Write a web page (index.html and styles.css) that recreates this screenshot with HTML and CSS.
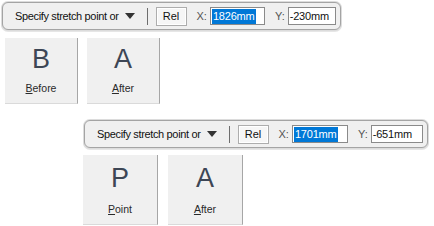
FILE: index.html
```html
<!DOCTYPE html>
<html>
<head>
<meta charset="utf-8">
<link rel="stylesheet" href="styles.css">
</head>
<body>
<div class="group group-one">
  <div class="toolbar">
    <span class="prompt">Specify stretch point or</span>
    <span class="caret"></span>
    <span class="sep"></span>
    <span class="rel">Rel</span>
    <span class="lbl lbl-x">X:</span>
    <span class="field field-x1"><span class="sel">1826mm</span></span>
    <span class="lbl lbl-y">Y:</span>
    <span class="field field-y1">-230mm</span>
  </div>
  <div class="buttons">
    <div class="btn"><span class="big">B</span><span class="cap"><u>B</u>efore</span></div>
    <div class="btn"><span class="big">A</span><span class="cap"><u>A</u>fter</span></div>
  </div>
</div>
<div class="group group-two">
  <div class="toolbar">
    <span class="prompt">Specify stretch point or</span>
    <span class="caret"></span>
    <span class="sep"></span>
    <span class="rel">Rel</span>
    <span class="lbl lbl-x">X:</span>
    <span class="field field-x2"><span class="sel">1701mm</span></span>
    <span class="lbl lbl-y">Y:</span>
    <span class="field field-y2">-651mm</span>
  </div>
  <div class="buttons">
    <div class="btn btn-wide"><span class="big">P</span><span class="cap"><u>P</u>oint</span></div>
    <div class="btn btn-wide"><span class="big">A</span><span class="cap"><u>A</u>fter</span></div>
  </div>
</div>
</body>
</html>
```
FILE: styles.css
```css
html, body {
  margin: 0;
  padding: 0;
  background: #ffffff;
}
body {
  font-family: "Liberation Sans", Arial, sans-serif;
  font-size: 11px;
  color: #1a1a1a;
  width: 434px;
  height: 226px;
  overflow: hidden;
  white-space: nowrap;
}
.group {
  display: flex;
  flex-direction: column;
  align-items: flex-start;
}
.group-one {
  padding: 2px 0 0 2px;
}
.group-two {
  margin-top: 16px;
  padding-left: 84px;
}
.toolbar {
  display: flex;
  flex-shrink: 0;
  align-items: center;
  height: 26px;
  border: 1px solid #a4a4a4;
  border-radius: 6px;
  background: #f0f0f0;
  box-shadow: 0 0 0 1px #dcdcdc, 0 1px 0 1px #e6e6e6;
  padding: 0 4px 0 12px;
}
.toolbar > span {
  flex-shrink: 0;
}
.prompt {
  font-size: 11px;
  letter-spacing: -0.35px;
  color: #111;
}
.caret {
  width: 0;
  height: 0;
  margin-left: 6px;
  border-left: 5px solid transparent;
  border-right: 5px solid transparent;
  border-top: 6px solid #333;
}
.sep {
  width: 1px;
  height: 17px;
  background: #6e6e6e;
  margin-left: 12px;
}
.rel {
  margin-left: 8px;
  height: 17px;
  width: 29px;
  line-height: 17px;
  text-align: center;
  border: 1px solid #adadad;
  background: #f6f6f6;
  box-shadow: inset 0 0 0 1px #ffffff;
  color: #111;
  font-size: 11px;
}
.lbl {
  color: #555;
  font-size: 11px;
}
.lbl-x {
  margin-left: 10px;
}
.lbl-y {
  margin-left: 10px;
}
.field {
  margin-left: 3px;
  height: 16px;
  line-height: 16px;
  border: 1px solid #8a8a8a;
  background: #ffffff;
  padding-left: 1px;
  font-size: 11px;
  letter-spacing: -0.2px;
  color: #111;
}
.field-x1 { width: 52px; }
.field-y1 { width: 45px; }
.field-x2 { width: 53px; }
.field-y2 { width: 49px; }
.sel {
  display: inline-block;
  background: #0078d7;
  color: #ffffff;
  height: 15px;
  line-height: 15px;
  padding: 0 1px;
}
.buttons {
  display: flex;
  gap: 9px;
  margin-top: 8px;
  margin-left: 3px;
}
.group-two .buttons {
  margin-top: 7px;
  margin-left: -1px;
  gap: 10px;
}
.btn {
  width: 72px;
  height: 65px;
  background: #f0f0f0;
  border-right: 1px solid #a6a6a6;
  border-bottom: 1px solid #dadada;
  display: flex;
  flex-direction: column;
  align-items: center;
}
.btn-wide {
  width: 74px;
  height: 69px;
}
.big {
  font-size: 27px;
  line-height: 27px;
  margin-top: 8px;
  color: #3d4655;
}
.cap {
  margin-top: 9px;
  font-size: 10.5px;
  color: #2a2a2a;
}
.btn-wide .cap {
  margin-top: 11px;
}
.btn-wide .big {
  margin-top: 10px;
}
```
